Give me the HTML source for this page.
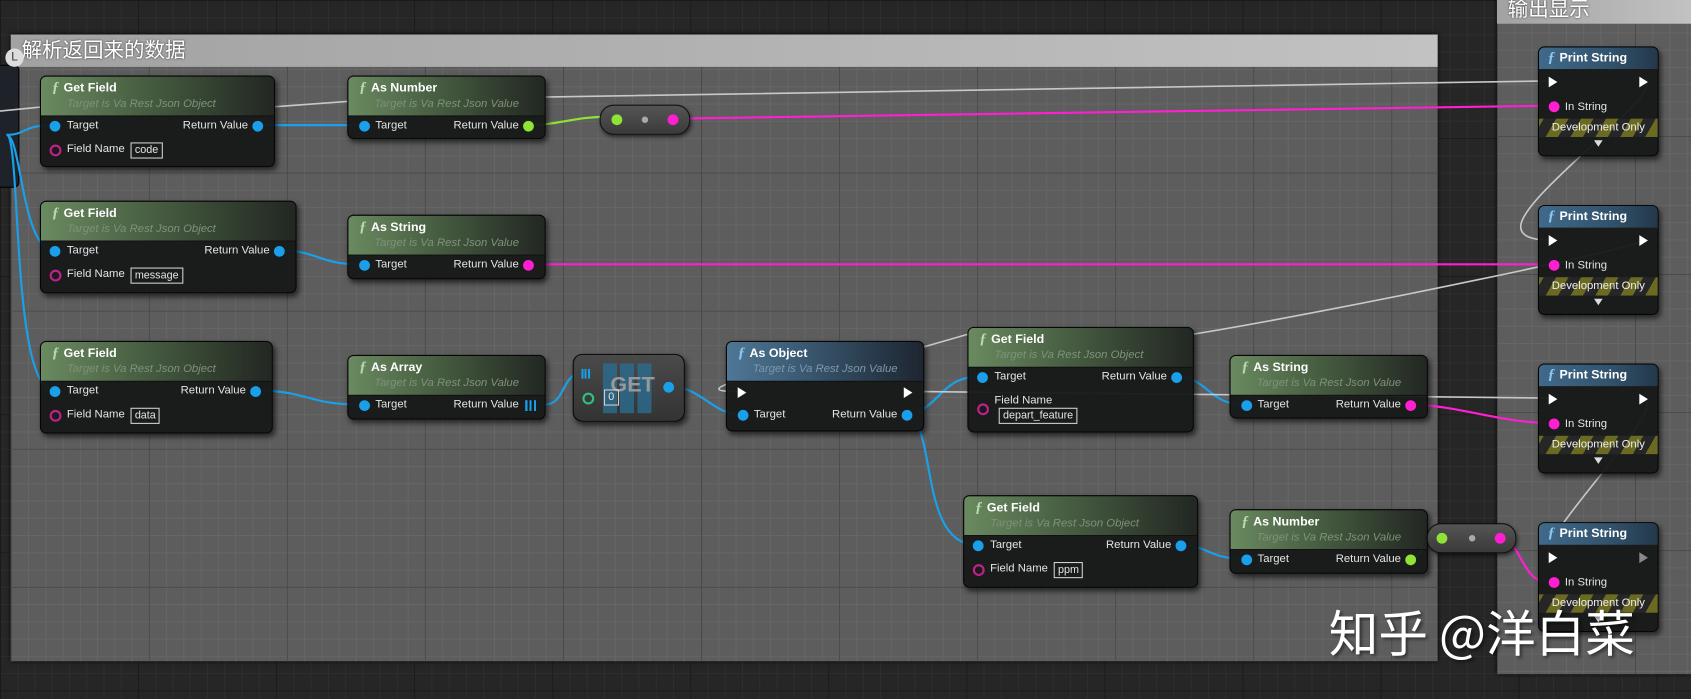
<!DOCTYPE html>
<html><head><meta charset="utf-8">
<style>
html,body{margin:0;padding:0;width:1691px;height:699px;overflow:hidden;background:#232323}
#w{position:absolute;left:0;top:0;width:1568px;height:648px;transform:scale(1.0785,1.0787);transform-origin:0 0;
background-color:#262626;
background-image:linear-gradient(#1a1a1a 1px,transparent 1px),linear-gradient(90deg,#1a1a1a 1px,transparent 1px),linear-gradient(#2e2e2e 1px,transparent 1px),linear-gradient(90deg,#2e2e2e 1px,transparent 1px);
background-size:128px 128px,128px 128px,16px 16px,16px 16px;font-family:"Liberation Sans","Noto Sans CJK SC",sans-serif;overflow:hidden}
.cm{position:absolute;background-color:#5d5d5d;
background-image:linear-gradient(#4a4a4a 1px,transparent 1px),linear-gradient(90deg,#4a4a4a 1px,transparent 1px),linear-gradient(#666 1px,transparent 1px),linear-gradient(90deg,#666 1px,transparent 1px);
background-size:128px 128px,128px 128px,16px 16px,16px 16px;box-shadow:0 0 4px #000}
.ch{position:absolute;left:0;right:0;top:0;background:linear-gradient(90deg,#a2a2a2,#c2c2c2);color:#fff;font-size:19px;padding-left:10px;text-shadow:0 0 2px #333}
.n{position:absolute;background:rgba(22,24,24,.95);border:1px solid #050505;border-radius:6px;box-shadow:2px 3px 5px rgba(0,0,0,.6);color:#e4e4e4;font-size:10.5px}
.h{position:relative;height:36px;border-radius:5px 5px 0 0;background:linear-gradient(90deg,#6a8a60 0%,#4a6244 40%,#2f3a2d 80%,#222722 100%);border-bottom:1px solid #111}
.h.b{background:linear-gradient(90deg,#4e7796 0%,#3a5870 40%,#263646 80%,#1e2630 100%)}
.h .t{position:absolute;left:10px;top:3px;font-weight:bold;font-size:11.5px;color:#fff}
.h .t i{font-family:"Liberation Serif",serif;color:#b8d8b0;font-size:14px;margin-right:4px}
.h.b .t i{color:#8cc8f0}
.h .s{position:absolute;left:24px;top:19px;font-style:italic;font-size:10.5px;color:#7e927a}
.h.b .s{color:#7f97aa}
.l{position:absolute;white-space:nowrap}
.p{position:absolute;width:10px;height:10px;border-radius:50%}
.bl{background:#1aa0ea}.pk{background:#ff1fd2}.gr{background:#8fe336}
.ring{position:absolute;width:7px;height:7px;border-radius:50%;border:2px solid #c0208a}
.box{position:absolute;border:1px solid #cfcfcf;padding:0 3px;font-size:10px;line-height:13px}
.ex{position:absolute;width:0;height:0;border-top:5px solid transparent;border-bottom:5px solid transparent;border-left:8px solid #fff}
.ps{position:absolute;width:110px;height:100px;background:rgba(22,24,24,.95);border:1px solid #050505;border-radius:6px;box-shadow:2px 3px 5px rgba(0,0,0,.6);color:#e4e4e4;font-size:10.5px}
.ps .hh{height:20px;border-radius:5px 5px 0 0;background:linear-gradient(90deg,#406a8a,#32526c 60%,#24384a);font-weight:bold;font-size:11.5px;color:#fff;padding-left:8px;line-height:20px}
.ps .hh i{font-family:"Liberation Serif",serif;color:#8cc8f0;font-size:14px;margin-right:4px}
.dev{position:absolute;left:0;right:0;top:66px;height:17px;background:repeating-linear-gradient(-60deg,#6b6a22 0 10px,#262626 10px 20px);text-align:center;line-height:17px;font-size:10.5px;color:#eee}
.tri{position:absolute;left:51px;top:86px;width:0;height:0;border-left:4px solid transparent;border-right:4px solid transparent;border-top:6px solid #ddd}
.rr{position:absolute;height:26px;border-radius:13px;background:linear-gradient(#555,#3a3a3a);border:1px solid #111;box-shadow:1px 2px 4px rgba(0,0,0,.6)}
</style></head><body>
<div id="w">
<div class="cm" style="left:1388px;top:-2px;width:180px;height:627px"><div class="ch" style="height:24px;line-height:24px">输出显示</div></div>
<div class="cm" style="left:10px;top:32px;width:1323px;height:581px"><div class="ch" style="height:30px;line-height:32px">解析返回来的数据</div></div>

<div style="position:absolute;left:-10px;top:60px;width:26px;height:112px;background:#1d2328;border-radius:5px;border:1px solid #000"></div>
<div style="position:absolute;left:5px;top:45px;width:17px;height:17px;border-radius:50%;background:#ddd;color:#333;font-size:11px;text-align:center;line-height:17px">L</div>

<svg style="position:absolute;left:0;top:0" width="1568" height="648" fill="none" stroke-width="2">
<g stroke="#1aa0ea" stroke-width="2">
<path d="M6 125 C25 125 20 116 50 116"/>
<path d="M6 125 C20 125 20 232 50 232"/>
<path d="M6 125 C20 125 10 362 50 362"/>
<path d="M238 116 L333 116"/>
<path d="M258 232 C295 232 295 245 333 245"/>
<path d="M237 362 C285 362 285 375 333 375"/>
<path d="M505 375 C525 375 520 346 540 346"/>
<path d="M620 358 C650 358 660 384 686 384"/>
<path d="M838 384 C870 384 870 349 908 349"/>
<path d="M838 384 C870 384 850 505 905 505"/>
<path d="M1090 349 C1120 349 1120 375 1153 375"/>
<path d="M1093 505 C1120 505 1120 518 1153 518"/>
</g>
<g stroke="#ff1fd2" stroke-width="2">
<path d="M625 110 L1436 98"/>
<path d="M488 245 L1436 245"/>
<path d="M1305 375 C1350 375 1390 392 1436 392"/>
<path d="M1390 498 C1410 498 1410 540 1436 540"/>
</g>
<g stroke="#8fe336" stroke-width="2">
<path d="M488 116 C520 116 530 108 570 108"/>
<path d="M1305 518 C1320 518 1320 498 1337 498"/>
</g>
<g stroke="#c8c8c8" stroke-width="1.5">
<path d="M0 103 L40 99 M254 99 L322 94 M504 90 L1436 75"/>
<path d="M1520 75 C1560 75 1410 180 1410 210 C1410 225 1440 222 1436 222"/>
<path d="M1520 222 C1560 222 1230 290 1105 310 M897 310 L855 322"/>
<path d="M1520 369 C1560 369 1420 500 1436 518"/>
<path d="M855 363 L1436 369"/>
<path d="M686 363 C660 363 660 360 686 352"/>
</g>
</svg>

<div class="n" style="left:37px;top:70px;width:216px;height:83px"><div class="h"><span class="t"><i>ƒ</i>Get Field</span><span class="s">Target is Va Rest Json Object</span></div>
<div class="p bl" style="left:8px;top:41px"></div><span class="l" style="left:24px;top:39px">Target</span>
<span class="l" style="right:24px;top:39px">Return Value</span><div class="p bl" style="right:10px;top:41px"></div>
<div class="ring" style="left:8px;top:63px"></div><span class="l" style="left:24px;top:61px">Field Name</span><span class="box" style="left:83px;top:61px">code</span></div>

<div class="n" style="left:322px;top:70px;width:182px;height:57px"><div class="h"><span class="t"><i>ƒ</i>As Number</span><span class="s">Target is Va Rest Json Value</span></div>
<div class="p bl" style="left:10px;top:41px"></div><span class="l" style="left:25px;top:39px">Target</span>
<span class="l" style="right:24px;top:39px">Return Value</span><div class="p gr" style="right:10px;top:41px"></div></div>

<div class="rr" style="left:556px;top:97px;width:82px"><div class="p gr" style="left:10px;top:8px"></div><div class="p" style="left:38px;top:10px;width:6px;height:6px;background:#aaa"></div><div class="p pk" style="left:62px;top:8px"></div></div>

<div class="n" style="left:37px;top:186px;width:236px;height:84px"><div class="h"><span class="t"><i>ƒ</i>Get Field</span><span class="s">Target is Va Rest Json Object</span></div>
<div class="p bl" style="left:8px;top:41px"></div><span class="l" style="left:24px;top:39px">Target</span>
<span class="l" style="right:24px;top:39px">Return Value</span><div class="p bl" style="right:10px;top:41px"></div>
<div class="ring" style="left:8px;top:63px"></div><span class="l" style="left:24px;top:61px">Field Name</span><span class="box" style="left:83px;top:61px">message</span></div>

<div class="n" style="left:322px;top:199px;width:182px;height:58px"><div class="h"><span class="t"><i>ƒ</i>As String</span><span class="s">Target is Va Rest Json Value</span></div>
<div class="p bl" style="left:10px;top:41px"></div><span class="l" style="left:25px;top:39px">Target</span>
<span class="l" style="right:24px;top:39px">Return Value</span><div class="p pk" style="right:10px;top:41px"></div></div>

<div class="n" style="left:37px;top:316px;width:214px;height:84px"><div class="h"><span class="t"><i>ƒ</i>Get Field</span><span class="s">Target is Va Rest Json Object</span></div>
<div class="p bl" style="left:8px;top:41px"></div><span class="l" style="left:24px;top:39px">Target</span>
<span class="l" style="right:24px;top:39px">Return Value</span><div class="p bl" style="right:10px;top:41px"></div>
<div class="ring" style="left:8px;top:63px"></div><span class="l" style="left:24px;top:61px">Field Name</span><span class="box" style="left:83px;top:61px">data</span></div>

<div class="n" style="left:322px;top:329px;width:182px;height:58px"><div class="h"><span class="t"><i>ƒ</i>As Array</span><span class="s">Target is Va Rest Json Value</span></div>
<div class="p bl" style="left:10px;top:41px"></div><span class="l" style="left:25px;top:39px">Target</span>
<span class="l" style="right:24px;top:39px">Return Value</span><div class="p" style="right:8px;top:41px;border-radius:0;background:repeating-linear-gradient(90deg,#1aa0ea 0 2px,transparent 2px 4px)"></div></div>

<div class="n" style="left:531px;top:328px;width:102px;height:61px;border-radius:9px;background:linear-gradient(#4a4a4a,#333)">
<div style="position:absolute;left:27px;top:8px;width:48px;height:46px;background:repeating-linear-gradient(90deg,#2a6d90 0 13px,transparent 13px 16px);opacity:.8"></div>
<span class="l" style="left:34px;top:17px;font-size:20px;font-weight:bold;color:#999">GET</span>
<div class="p" style="left:7px;top:13px;width:9px;height:9px;border-radius:0;background:repeating-linear-gradient(90deg,#1aa0ea 0 2px,transparent 2px 3px)"></div>
<div class="ring" style="left:8px;top:35px;border-color:#2fbf80"></div><span class="box" style="left:28px;top:32px">0</span>
<div class="p bl" style="left:83px;top:25px"></div></div>

<div class="n" style="left:673px;top:316px;width:182px;height:82px"><div class="h b"><span class="t"><i>ƒ</i>As Object</span><span class="s">Target is Va Rest Json Value</span></div>
<div class="ex" style="left:10px;top:42px"></div><div class="ex" style="right:10px;top:42px"></div>
<div class="p bl" style="left:10px;top:63px"></div><span class="l" style="left:25px;top:61px">Target</span>
<span class="l" style="right:24px;top:61px">Return Value</span><div class="p bl" style="right:10px;top:63px"></div></div>

<div class="n" style="left:897px;top:303px;width:208px;height:96px"><div class="h"><span class="t"><i>ƒ</i>Get Field</span><span class="s">Target is Va Rest Json Object</span></div>
<div class="p bl" style="left:8px;top:41px"></div><span class="l" style="left:24px;top:39px">Target</span>
<span class="l" style="right:24px;top:39px">Return Value</span><div class="p bl" style="right:10px;top:41px"></div>
<div class="ring" style="left:8px;top:70px"></div><span class="l" style="left:24px;top:61px">Field Name</span><span class="box" style="left:28px;top:74px">depart_feature</span></div>

<div class="n" style="left:1140px;top:329px;width:182px;height:57px"><div class="h"><span class="t"><i>ƒ</i>As String</span><span class="s">Target is Va Rest Json Value</span></div>
<div class="p bl" style="left:10px;top:41px"></div><span class="l" style="left:25px;top:39px">Target</span>
<span class="l" style="right:24px;top:39px">Return Value</span><div class="p pk" style="right:10px;top:41px"></div></div>

<div class="n" style="left:893px;top:459px;width:216px;height:84px"><div class="h"><span class="t"><i>ƒ</i>Get Field</span><span class="s">Target is Va Rest Json Object</span></div>
<div class="p bl" style="left:8px;top:41px"></div><span class="l" style="left:24px;top:39px">Target</span>
<span class="l" style="right:24px;top:39px">Return Value</span><div class="p bl" style="right:10px;top:41px"></div>
<div class="ring" style="left:8px;top:63px"></div><span class="l" style="left:24px;top:61px">Field Name</span><span class="box" style="left:83px;top:61px">ppm</span></div>

<div class="n" style="left:1140px;top:472px;width:182px;height:58px"><div class="h"><span class="t"><i>ƒ</i>As Number</span><span class="s">Target is Va Rest Json Value</span></div>
<div class="p bl" style="left:10px;top:41px"></div><span class="l" style="left:25px;top:39px">Target</span>
<span class="l" style="right:24px;top:39px">Return Value</span><div class="p gr" style="right:10px;top:41px"></div></div>

<div class="rr" style="left:1323px;top:485px;width:81px"><div class="p gr" style="left:8px;top:8px"></div><div class="p" style="left:38px;top:10px;width:6px;height:6px;background:#aaa"></div><div class="p pk" style="left:62px;top:8px"></div></div>

<div class="ps" style="left:1426px;top:43px"><div class="hh"><i>ƒ</i>Print String</div><div class="ex" style="left:9px;top:27px"></div><div class="ex" style="right:9px;top:27px"></div><div class="p pk" style="left:9px;top:50px"></div><span class="l" style="left:24px;top:49px">In String</span><div class="dev">Development Only</div><div class="tri"></div></div>
<div class="ps" style="left:1426px;top:190px"><div class="hh"><i>ƒ</i>Print String</div><div class="ex" style="left:9px;top:27px"></div><div class="ex" style="right:9px;top:27px"></div><div class="p pk" style="left:9px;top:50px"></div><span class="l" style="left:24px;top:49px">In String</span><div class="dev">Development Only</div><div class="tri"></div></div>
<div class="ps" style="left:1426px;top:337px"><div class="hh"><i>ƒ</i>Print String</div><div class="ex" style="left:9px;top:27px"></div><div class="ex" style="right:9px;top:27px"></div><div class="p pk" style="left:9px;top:50px"></div><span class="l" style="left:24px;top:49px">In String</span><div class="dev">Development Only</div><div class="tri"></div></div>
<div class="ps" style="left:1426px;top:484px"><div class="hh"><i>ƒ</i>Print String</div><div class="ex" style="left:9px;top:27px"></div><div class="ex" style="right:9px;top:27px;border-left-color:#888"></div><div class="p pk" style="left:9px;top:50px"></div><span class="l" style="left:24px;top:49px">In String</span><div class="dev">Development Only</div><div class="tri"></div></div>

<div style="position:absolute;left:1232px;top:552px;font-size:46px;color:#fff;text-shadow:2px 2px 3px rgba(0,0,0,.5);font-family:'Noto Sans CJK SC',sans-serif;white-space:nowrap">知乎 @洋白菜</div>
</div>
</body></html>
